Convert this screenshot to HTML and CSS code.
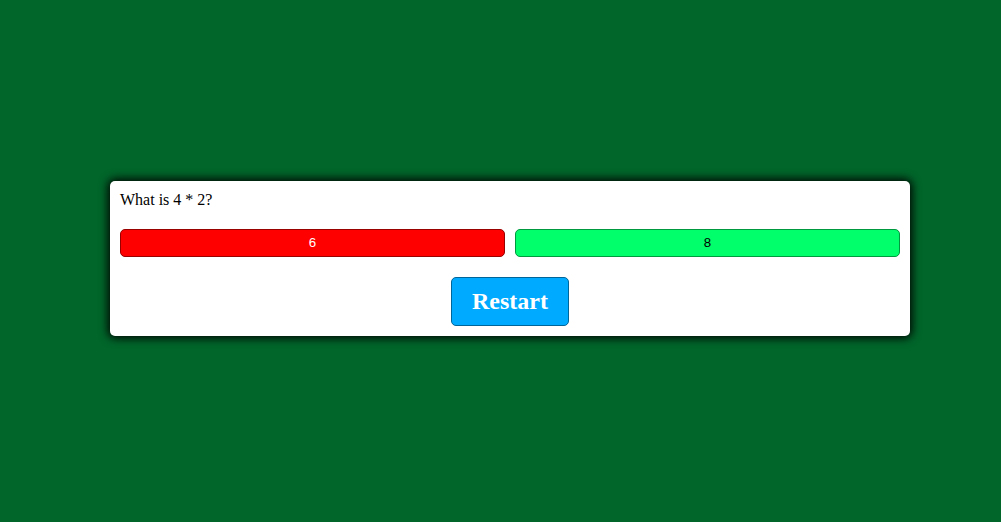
FILE: index.html
```html
<!DOCTYPE html>
<html>
<head>
<meta charset="utf-8">
<link rel="stylesheet" href="styles.css">
</head>
<body class="correct">
<div class="container">
  <div class="question">What is 4 * 2?</div>
  <div class="btn-grid">
    <button class="btn wrong">6</button>
    <button class="btn correct">8</button>
  </div>
  <div class="controls">
    <button class="btn restart-btn">Restart</button>
  </div>
</div>
</body>
</html>
```
FILE: styles.css
```css
*, *::before, *::after {
  box-sizing: border-box;
}
html, body {
  margin: 0;
  padding: 0;
}
body {
  display: flex;
  width: 100%;
  height: 100vh;
  justify-content: center;
  align-items: center;
  padding-left: 19px;
  padding-bottom: 5px;
  background-color: rgb(0, 102, 42);
  font-family: "Liberation Serif", "Times New Roman", serif;
  overflow: hidden;
}
.container {
  width: 800px;
  background-color: #fff;
  border-radius: 5px;
  padding: 10px;
  box-shadow: 0 0 10px 2px #000;
}
.question {
  font-size: 16px;
  line-height: 18px;
  color: #000;
}
.btn-grid {
  display: grid;
  grid-template-columns: repeat(2, 1fr);
  gap: 10px;
  margin: 20px 0;
}
.btn {
  border: 1px solid rgb(0, 102, 153);
  background-color: rgb(0, 170, 255);
  border-radius: 5px;
  padding: 5px 10px;
  color: #fff;
  font-family: "Liberation Sans", Arial, sans-serif;
  font-size: 13.33px;
  line-height: 16px;
  height: 28px;
}
.btn.wrong {
  border-color: rgb(153, 0, 0);
  background-color: rgb(255, 0, 0);
  color: #fff;
}
.btn.correct {
  border-color: rgb(0, 153, 64);
  background-color: rgb(0, 255, 106);
  color: #000;
}
.controls {
  display: flex;
  justify-content: center;
  align-items: center;
}
.restart-btn {
  font-family: "Liberation Serif", "Times New Roman", serif;
  font-size: 24px;
  font-weight: bold;
  line-height: 27px;
  height: 49px;
  padding: 10px 20px;
}
```
